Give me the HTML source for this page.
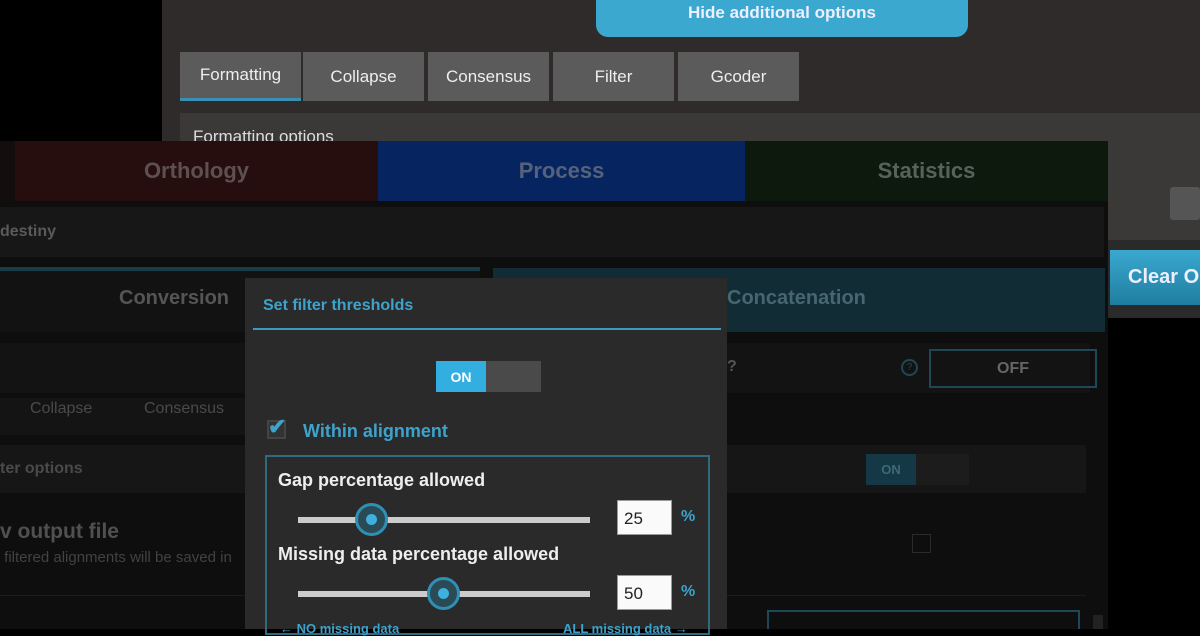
<!DOCTYPE html>
<html><head><style>
*{margin:0;padding:0;box-sizing:border-box}
body{width:1200px;height:629px;background:#000;position:relative;overflow:hidden;font-family:"Liberation Sans",sans-serif}
.a{position:absolute}
.c{display:flex;align-items:center;justify-content:center}
</style></head><body>
<div class="a" style="left:162px;top:0;width:1038px;height:318px;background:#2e2b2a"></div>
<div class="a c" style="left:596px;top:0;width:372px;height:37px;background:#3aa8cf;border-radius:0 0 12px 12px;color:#eef;font-weight:bold;font-size:17px;padding-bottom:12px">Hide additional options</div>
<div class="a c" style="left:180px;top:52px;width:121px;height:49px;background:#5b5b5b;color:#eee;font-size:17px;border-bottom:3px solid #3a8fb5">Formatting</div>
<div class="a c" style="left:303px;top:52px;width:121px;height:49px;background:#5b5b5b;color:#eee;font-size:17px">Collapse</div>
<div class="a c" style="left:428px;top:52px;width:121px;height:49px;background:#5b5b5b;color:#eee;font-size:17px">Consensus</div>
<div class="a c" style="left:553px;top:52px;width:121px;height:49px;background:#5b5b5b;color:#eee;font-size:17px">Filter</div>
<div class="a c" style="left:678px;top:52px;width:121px;height:49px;background:#5b5b5b;color:#eee;font-size:17px">Gcoder</div>
<div class="a" style="left:180px;top:113px;width:1020px;height:205px;background:#3b3938"></div>
<div class="a" style="left:193px;top:127px;color:#ddd;font-size:17px">Formatting options</div>
<div class="a" style="left:1170px;top:187px;width:30px;height:33px;background:#555;border-radius:3px"></div>
<div class="a" style="left:1108px;top:240px;width:92px;height:78px;background:#2a2a2a"></div>
<div class="a" style="left:1110px;top:250px;width:90px;height:55px;background:linear-gradient(#3aa8cf,#1f7ea0);color:#eef;font-weight:bold;font-size:20px;padding:16px 0 0 18px">Clear O</div>
<div class="a" style="left:0;top:141px;width:1108px;height:488px;background:#0e0e0e"></div>
<div class="a" style="left:0;top:141px;width:15px;height:60px;background:#130d0d"></div>
<div class="a c" style="left:15px;top:141px;width:363px;height:60px;background:#250e0d;color:#5e504e;font-weight:bold;font-size:22px">Orthology</div>
<div class="a c" style="left:378px;top:141px;width:367px;height:60px;background:#062460;color:#56627a;font-weight:bold;font-size:22px">Process</div>
<div class="a c" style="left:745px;top:141px;width:363px;height:60px;background:#0c190c;color:#56625a;font-weight:bold;font-size:22px">Statistics</div>
<div class="a" style="left:552px;top:194px;width:0;height:0;border-left:10px solid transparent;border-right:10px solid transparent;border-top:7px solid #062460"></div>
<div class="a" style="left:0;top:207px;width:1104px;height:50px;background:#171717;color:#5a5a5a;font-size:16px;font-weight:bold;padding:16px 0 0 0">destiny</div>
<div class="a" style="left:0;top:267px;width:480px;height:65px;background:#121212;border-top:4px solid #173e48"></div>
<div class="a" style="left:119px;top:287px;color:#555;font-size:20px;font-weight:bold">Conversion</div>
<div class="a" style="left:493px;top:268px;width:612px;height:64px;background:#112c35"></div>
<div class="a" style="left:727px;top:287px;color:#486670;font-size:20px;font-weight:bold">Concatenation</div>
<div class="a" style="left:0;top:343px;width:1090px;height:50px;background:#131313"></div>
<div class="a" style="left:727px;top:358px;color:#555;font-size:16px;font-weight:bold">?</div>
<div class="a c" style="left:901px;top:359px;width:17px;height:17px;border:2px solid #1e4855;border-radius:50%;color:#1e4855;font-size:10px">?</div>
<div class="a c" style="left:929px;top:349px;width:168px;height:39px;border:2px solid #1e4855;color:#666;font-size:16px;font-weight:bold">OFF</div>
<div class="a" style="left:0;top:398px;width:245px;height:37px;background:#141414"></div>
<div class="a" style="left:30px;top:400px;color:#4a4a4a;font-size:16px">Collapse</div>
<div class="a" style="left:144px;top:400px;color:#4a4a4a;font-size:16px">Consensus</div>
<div class="a" style="left:0;top:445px;width:1086px;height:48px;background:#161616"></div>
<div class="a" style="left:0;top:460px;color:#4a4a4a;font-size:16px;font-weight:bold">ter options</div>
<div class="a c" style="left:866px;top:454px;width:50px;height:31px;background:#143846;color:#3c6a78;font-size:13px;font-weight:bold">ON</div>
<div class="a" style="left:916px;top:454px;width:53px;height:31px;background:#1c1c1c"></div>
<div class="a" style="left:0;top:520px;color:#505050;font-size:21px;font-weight:bold">v output file</div>
<div class="a" style="left:0;top:549px;color:#424242;font-size:15px;white-space:nowrap">&nbsp;filtered alignments will be saved in</div>
<div class="a" style="left:912px;top:534px;width:19px;height:19px;border:1px solid #2a2a2a"></div>
<div class="a" style="left:0;top:595px;width:1086px;height:1px;background:#1c1c1c"></div>
<div class="a" style="left:767px;top:610px;width:313px;height:19px;border:2px solid #1e4855;border-bottom:none"></div>
<div class="a" style="left:1093px;top:615px;width:10px;height:14px;background:#222"></div>
<div class="a" style="left:245px;top:278px;width:482px;height:351px;background:#2a2a2a"></div>
<div class="a" style="left:263px;top:297px;color:#3ea3cc;font-size:16px;font-weight:bold">Set filter thresholds</div>
<div class="a" style="left:253px;top:328px;width:468px;height:2px;background:#3e98bd"></div>
<div class="a c" style="left:436px;top:361px;width:50px;height:31px;background:#33aee0;color:#fff;font-size:14px;font-weight:bold">ON</div>
<div class="a" style="left:486px;top:361px;width:55px;height:31px;background:#4a4a4a"></div>
<div class="a" style="left:267px;top:420px;width:19px;height:19px;border:2px solid #444;background:#333"></div>
<div class="a" style="left:268px;top:414px;color:#3ea3cc;font-size:22px;font-weight:bold">✔</div>
<div class="a" style="left:303px;top:421px;color:#3ea3cc;font-size:18px;font-weight:bold">Within alignment</div>
<div class="a" style="left:265px;top:455px;width:445px;height:180px;border:2px solid #2f6a80"></div>
<div class="a" style="left:278px;top:470px;color:#eee;font-size:18px;font-weight:bold">Gap percentage allowed</div>
<div class="a" style="left:298px;top:517px;width:292px;height:6px;background:#ccc"></div>
<div class="a" style="left:355px;top:503px;width:33px;height:33px;border-radius:50%;border:3px solid #2f8fb5;background:#2a4a55"></div>
<div class="a" style="left:366px;top:514px;width:11px;height:11px;border-radius:50%;background:#3fb0dd"></div>
<div class="a" style="left:617px;top:500px;width:55px;height:35px;background:#fafafa;border:1px solid #999;color:#222;font-size:17px;padding:8px 0 0 6px">25</div>
<div class="a" style="left:681px;top:508px;color:#3ea3cc;font-size:16px;font-weight:bold">%</div>
<div class="a" style="left:278px;top:544px;color:#eee;font-size:18px;font-weight:bold">Missing data percentage allowed</div>
<div class="a" style="left:298px;top:591px;width:292px;height:6px;background:#ccc"></div>
<div class="a" style="left:427px;top:577px;width:33px;height:33px;border-radius:50%;border:3px solid #2f8fb5;background:#2a4a55"></div>
<div class="a" style="left:438px;top:588px;width:11px;height:11px;border-radius:50%;background:#3fb0dd"></div>
<div class="a" style="left:617px;top:575px;width:55px;height:35px;background:#fafafa;border:1px solid #999;color:#222;font-size:17px;padding:8px 0 0 6px">50</div>
<div class="a" style="left:681px;top:583px;color:#3ea3cc;font-size:16px;font-weight:bold">%</div>
<div class="a" style="left:280px;top:621px;color:#3ea3cc;font-size:13px;font-weight:bold">← NO missing data</div>
<div class="a" style="left:563px;top:621px;color:#3ea3cc;font-size:13px;font-weight:bold">ALL missing data →</div>
</body></html>
